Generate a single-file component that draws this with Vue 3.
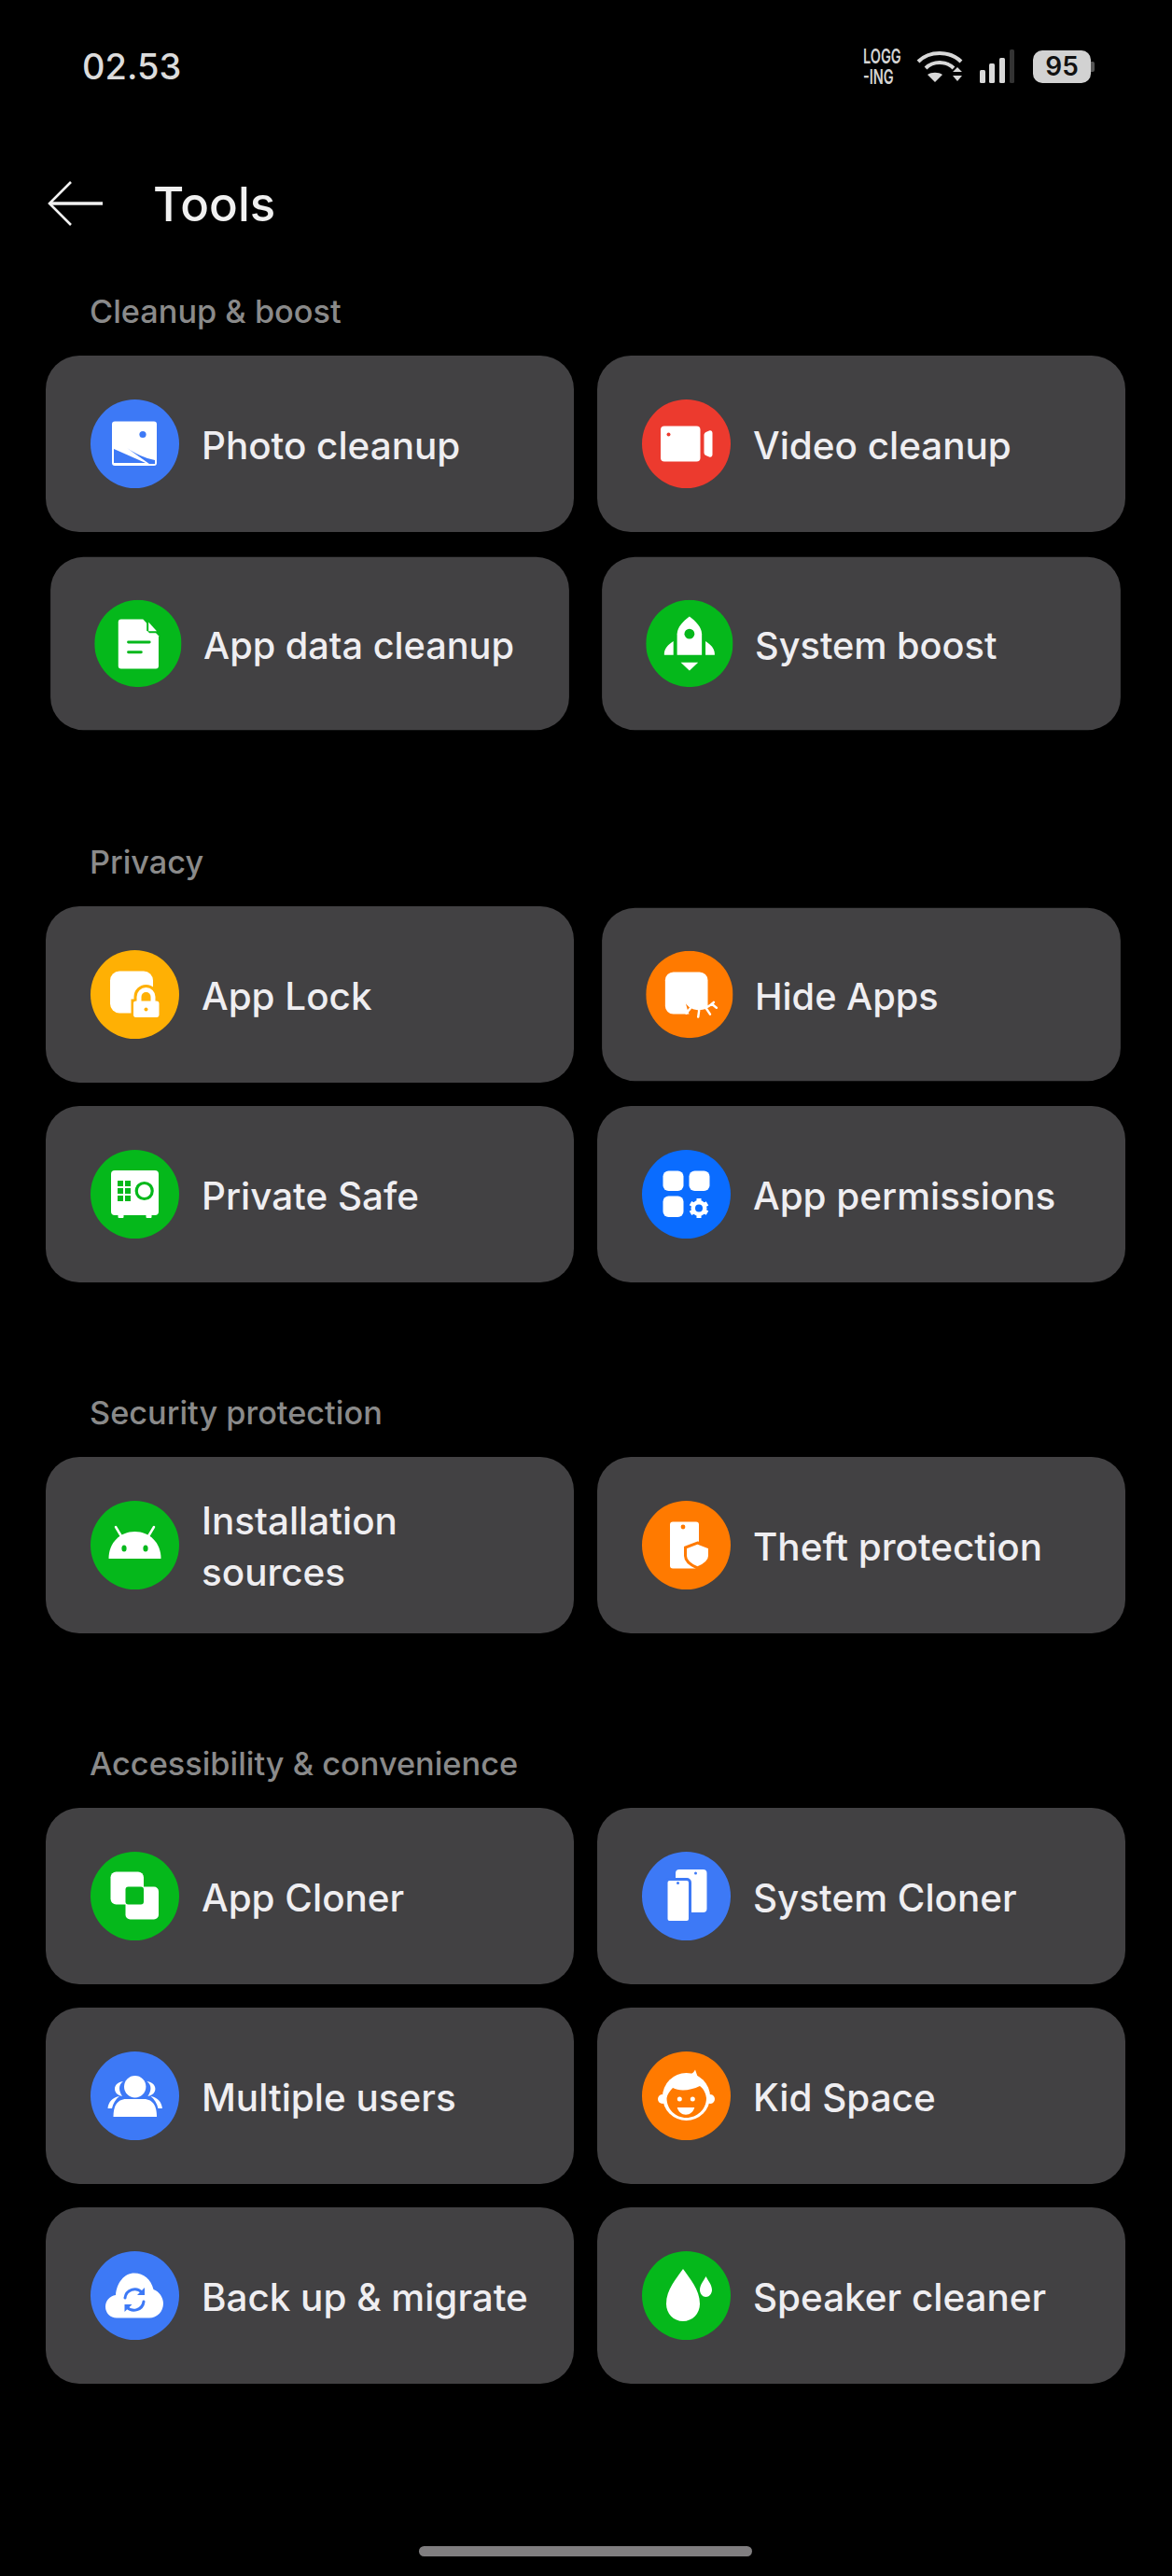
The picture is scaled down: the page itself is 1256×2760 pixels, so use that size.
<template>
  <div class="screen">
    <div class="status">
      <span class="time">02.53</span>
      <div class="status-right">
        <div class="logging"><span>LOGG</span><span>-ING</span></div>
        <svg class="wifi" viewBox="0 0 50 36" width="50" height="36" fill="none" stroke="#d8d8d8" stroke-width="4">
          <path d="M2 13C14 1 36 1 48 13" />
          <path d="M10 20C18 12 32 12 40 20" />
          <path d="M20 35l-8-8c4-3 12-3 16 0z" fill="#d8d8d8" stroke="none" />
          <path d="M39 24l5-5 5 5zM39 28h10l-5 6z" fill="#d8d8d8" stroke="none" />
        </svg>
        <svg class="signal" viewBox="0 0 37 36" width="37" height="36">
          <rect x="0" y="22" width="6" height="14" rx="1.5" fill="#d8d8d8" />
          <rect x="10" y="15" width="6" height="21" rx="1.5" fill="#d8d8d8" />
          <rect x="21" y="9" width="6" height="27" rx="1.5" fill="#d8d8d8" />
          <rect x="32" y="0" width="5" height="36" rx="1.5" fill="#333" />
        </svg>
        <div class="battery"><span>95</span><i></i></div>
      </div>
    </div>

    <div class="titlebar">
      <svg class="back" viewBox="0 0 62 50" width="62" height="50" fill="none" stroke="#f2f2f2" stroke-width="3.5">
        <path d="M26 2L3 25l23 23" stroke-width="2.6" />
        <path d="M3 25h57" />
      </svg>
      <h1>Tools</h1>
    </div>

    <section v-for="group in groups" :key="group.title" class="group">
      <h2>{{ group.title }}</h2>
      <div class="grid">
        <div
          v-for="item in group.items"
          :key="item.label"
          class="card"
          :class="{ shrunk: item.shrunk }"
        >
          <svg class="icon" :class="item.color" viewBox="0 0 95 95" width="95" height="95" fill="#fff">
            <circle class="disc" cx="47.5" cy="47.5" r="47.5" />
            <template v-if="item.icon === 'photo'">
              <rect x="23" y="23.5" width="48" height="47.5" rx="3" />
              <circle class="cut" cx="56" cy="37.5" r="3.6" />
              <path class="cut" d="M25 53l34 15H25z" />
              <path class="cut" d="M39 52c9 6 19 11 30 13v4h-6z" />
            </template>
            <template v-else-if="item.icon === 'video'">
              <rect x="20" y="28.5" width="42.5" height="38" rx="4" />
              <path d="M66.5 38c0-1.5 1-2.5 2-3l3.5-1.5c2-.8 3.5.5 3.5 2.5v23c0 2-1.5 3.2-3.5 2.5l-3.5-1.5c-1-.5-2-1.5-2-3z" />
              <circle class="cut" cx="28.5" cy="37.5" r="2" />
            </template>
            <template v-else-if="item.icon === 'doc'">
              <path d="M29 21h24l17 18v33a3 3 0 0 1-3 3H29a3 3 0 0 1-3-3V24a3 3 0 0 1 3-3z" />
              <path class="cut" d="M57 23l12 13h-9l-3-3z" />
              <path d="M59 24l9 10h-9z" />
              <path class="line" d="M37 46h23M37 57h14" />
            </template>
            <template v-else-if="item.icon === 'rocket'">
              <path d="M47.5 18c7 5.5 13 11 13.5 19v23H34V37c.5-8 6.5-13.5 13.5-19z" />
              <circle class="cut" cx="47.5" cy="37" r="5.5" />
              <path d="M30 45v15H20c-.5-6 3.5-11 10-15zM65 45v15h10c.5-6-3.5-11-10-15z" />
              <path d="M38 68h19l-9.5 9z" />
            </template>
            <template v-else-if="item.icon === 'lock'">
              <rect x="21" y="22.5" width="46" height="45" rx="10" />
              <path class="outline" d="M45 54h3v-4a11.5 11.5 0 0 1 23 0v4h3v16a3 3 0 0 1-3 3H48a3 3 0 0 1-3-3z" />
              <path class="cut" d="M54.5 56v-6a5 5 0 0 1 10 0v6z" />
              <rect x="46" y="54.5" width="27.5" height="17.5" rx="3" />
              <circle class="cut" cx="59.5" cy="63.5" r="2" />
            </template>
            <template v-else-if="item.icon === 'hide'">
              <rect x="21" y="23" width="46.5" height="46" rx="9" />
              <path class="cut" d="M43 54C48 65 66 67 75 56L76 74H50C46 68 44 60 43 54z" />
              <path class="lash" d="M43 54c5 11 20 13 31 2M49 62l-5 6M58 65l-1 7M66 63l4 6M72 58l5 4" />
            </template>
            <template v-else-if="item.icon === 'safe'">
              <rect x="22" y="22" width="51" height="48" rx="4" />
              <rect x="29.5" y="69" width="6" height="4" rx="1" />
              <rect x="59.5" y="69" width="6" height="4" rx="1" />
              <g class="cut">
                <rect x="29" y="33" width="6" height="6" /><rect x="37" y="33" width="6" height="6" />
                <rect x="29" y="41" width="6" height="6" /><rect x="37" y="41" width="6" height="6" />
                <rect x="29" y="49" width="6" height="6" /><rect x="37" y="49" width="6" height="6" />
              </g>
              <circle class="ring" cx="57.7" cy="44" r="8.5" />
            </template>
            <template v-else-if="item.icon === 'apps'">
              <rect x="22.5" y="22.5" width="22" height="21.5" rx="6" />
              <rect x="50.5" y="22.5" width="22" height="21.5" rx="6" />
              <rect x="22.5" y="49.5" width="22" height="22.5" rx="6" />
              <circle cx="61" cy="62.5" r="8.5" />
              <path class="teeth" d="M61 52v21M52 57.2l18 10.5M52 67.8l18-10.5" />
              <circle class="cut" cx="61" cy="62.5" r="4" />
            </template>
            <template v-else-if="item.icon === 'android'">
              <path d="M19.5 62c0-17 12-29 28-29s28 12 28 29z" />
              <path class="lash" d="M33 38l-6-10M62 38l6-10" />
              <ellipse class="cut" cx="36" cy="51" rx="2.6" ry="3.6" />
              <ellipse class="cut" cx="59" cy="51" rx="2.6" ry="3.6" />
            </template>
            <template v-else-if="item.icon === 'theft'">
              <rect x="30" y="22.5" width="31" height="50" rx="3" />
              <circle class="cut" cx="44" cy="28" r="2.4" />
              <path class="shield" d="M59.5 45l13 5v9c0 6-6 10-13 13-7-3-13-7-13-13v-9z" />
            </template>
            <template v-else-if="item.icon === 'clone'">
              <rect x="21.5" y="21.5" width="35.5" height="35" rx="6" />
              <rect x="37.5" y="37.5" width="35.5" height="35" rx="5" />
              <rect class="cut" x="37.5" y="37.5" width="19.5" height="19" rx="3" />
            </template>
            <template v-else-if="item.icon === 'users'">
              <path d="M35 32C28 33 26 37 26 40C26 44 29 47 34 48C32 45 31 42 31 39.5C31 37 32 34 35 32z" />
              <path d="M31 48C24 49 19 54 18.5 61L23 61C24 56 27 51 31 48z" />
              <g transform="translate(95.4 0) scale(-1 1)">
                <path d="M35 32C28 33 26 37 26 40C26 44 29 47 34 48C32 45 31 42 31 39.5C31 37 32 34 35 32z" />
                <path d="M31 48C24 49 19 54 18.5 61L23 61C24 56 27 51 31 48z" />
              </g>
              <circle cx="47.7" cy="37.7" r="11.7" />
              <path d="M24.5 70c0-10 3-19 14-19h18.500c11 0 14 9 14 19z" />
            </template>
            <template v-else-if="item.icon === 'cloud'">
              <path d="M28 71.5c-7 0-12-5.5-12-12 0-6.5 4.5-11.5 11-12.5C28 34 36 23.5 47 23.5c10 0 18 7 20.5 17.5 6 2 10.5 8.5 10.5 15 0 8.5-6.5 15.5-15 15.5z" />
              <path class="sync" d="M37 50a10.5 10.5 0 0 1 18-6M57 54a10.5 10.5 0 0 1-18 6" />
              <path class="cut" d="M58 39v8h-8zM36.5 65v-8h8z" />
            </template>
            <template v-else-if="item.icon === 'phones'">
              <rect x="36" y="19" width="33.5" height="46" rx="4" />
              <rect class="phone-front" x="26" y="29.5" width="25.5" height="46" rx="3.5" />
              <circle class="cut" cx="57.5" cy="23" r="1.5" />
              <circle class="cut" cx="38.5" cy="33.5" r="1.5" />
            </template>
            <template v-else-if="item.icon === 'kid'">
              <circle cx="22" cy="51" r="5" />
              <circle cx="73" cy="51" r="5" />
              <circle cx="47.5" cy="48.5" r="25.5" />
              <path d="M44 27c6-1 11-3 13-7.5l3 8.5z" />
              <path class="cut" d="M26.5 50C27 46 30 42 33 39C40 43 52 42 62 37C66 40 68.5 45 69 50C69 62 59 71 47.5 71C36 71 26.5 62 26.5 50z" />
              <circle cx="40.3" cy="51" r="2.5" />
              <circle cx="54.3" cy="51" r="2.5" />
              <path d="M37.7 60h18.6c-1 4.5-5 7.7-9.3 7.7s-8.300-3.2-9.300-7.700z" />
            </template>
            <template v-else-if="item.icon === 'drops'">
              <path d="M44 19c7 10 18 22 18 37.5C62 67 54 75 44 75s-18-8-18-18.5C26 41 37 29 44 19z" />
              <path d="M68.5 27c2 4 6.5 9 6.5 14.5 0 4-3 7.500-6.500 7.500S62 45.500 62 41.500C62 36 66.500 31 68.500 27z" />
            </template>
          </svg>
          <span class="label">{{ item.label }}</span>
        </div>
      </div>
    </section>

    <div class="home-bar"></div>
  </div>
</template>

<script setup>
const groups = [
  {
    title: 'Cleanup & boost',
    items: [
      { label: 'Photo cleanup', icon: 'photo', color: 'blue' },
      { label: 'Video cleanup', icon: 'video', color: 'red' },
      { label: 'App data cleanup', icon: 'doc', color: 'green', shrunk: true },
      { label: 'System boost', icon: 'rocket', color: 'green', shrunk: true },
    ],
  },
  {
    title: 'Privacy',
    items: [
      { label: 'App Lock', icon: 'lock', color: 'yellow' },
      { label: 'Hide Apps', icon: 'hide', color: 'orange', shrunk: true },
      { label: 'Private Safe', icon: 'safe', color: 'green' },
      { label: 'App permissions', icon: 'apps', color: 'azure' },
    ],
  },
  {
    title: 'Security protection',
    items: [
      { label: 'Installation sources', icon: 'android', color: 'green' },
      { label: 'Theft protection', icon: 'theft', color: 'orange' },
    ],
  },
  {
    title: 'Accessibility & convenience',
    items: [
      { label: 'App Cloner', icon: 'clone', color: 'green' },
      { label: 'System Cloner', icon: 'phones', color: 'blue' },
      { label: 'Multiple users', icon: 'users', color: 'blue' },
      { label: 'Kid Space', icon: 'kid', color: 'orange' },
      { label: 'Back up & migrate', icon: 'cloud', color: 'blue' },
      { label: 'Speaker cleaner', icon: 'drops', color: 'green' },
    ],
  },
]
</script>

<style>
html, body {
  background: #000;
}
</style>

<style scoped>
.screen {
  position: relative;
  width: 1256px;
  height: 2760px;
  background: #000;
  font-family: Inter, "Liberation Sans", sans-serif;
  overflow: hidden;
}
.status {
  height: 142px;
  padding: 0 83px 0 88px;
  display: flex;
  align-items: center;
  justify-content: space-between;
  box-sizing: border-box;
}
.time {
  font-size: 38px;
  font-weight: 500;
  color: #dcdcdc;
}
.status-right {
  display: flex;
  align-items: center;
}
.logging {
  width: 39px;
  display: flex;
  flex-direction: column;
  font-size: 22px;
  line-height: 22px;
  font-weight: 600;
  color: #d4d4d4;
  margin-right: 18px;
}
.logging span {
  display: block;
  transform: scaleX(0.66);
  transform-origin: left center;
  white-space: nowrap;
}
.wifi {
  margin-right: 18px;
}
.signal {
  margin-right: 20px;
}
.battery {
  position: relative;
  width: 62px;
  height: 35px;
  margin-right: 4px;
  border-radius: 10px;
  background: #d2d2d2;
  display: flex;
  align-items: center;
  justify-content: center;
  color: #111;
  font-size: 28px;
  font-weight: 600;
}
.battery i {
  position: absolute;
  right: -4px;
  top: 12px;
  width: 4px;
  height: 11px;
  background: #555;
  border-radius: 0 2px 2px 0;
}
.titlebar {
  height: 152px;
  padding-left: 50px;
  display: flex;
  align-items: center;
}
.titlebar h1 {
  margin: 0 0 0 52px;
  font-size: 51px;
  font-weight: 500;
  color: #f0f0f0;
}
.group {
  padding: 16px 50px 100px 49px;
}
.group h2 {
  margin: 0 0 23px 47px;
  font-size: 34.3px;
  line-height: 48px;
  font-weight: 500;
  color: #8a8a8a;
}
.grid {
  display: grid;
  grid-template-columns: 566px 566px;
  grid-auto-rows: 189px;
  gap: 25px;
}
.card {
  display: flex;
  align-items: center;
  gap: 24px;
  padding: 0 40px 0 48px;
  border-radius: 36px;
  background: #424143;
}
.card.shrunk {
  transform: scale(0.982);
}
.icon {
  flex: none;
}
.label {
  padding-top: 3px;
  font-size: 40.4px;
  line-height: 55px;
  font-weight: 500;
  color: #efeef1;
}
.blue { --disc: #3d79f6; }
.red { --disc: #ec3a2e; }
.green { --disc: #05b81b; }
.yellow { --disc: #ffb004; }
.orange { --disc: #ff7a00; }
.azure { --disc: #0a6cff; }
.disc, .cut {
  fill: var(--disc);
}
.line, .sync {
  fill: none;
  stroke: var(--disc);
  stroke-width: 3;
  stroke-linecap: round;
}
.outline, .shield, .phone-front {
  stroke: var(--disc);
  stroke-width: 3;
  fill: #fff;
}
.ring {
  fill: none;
  stroke: var(--disc);
  stroke-width: 3.2;
}
.lash {
  fill: none;
  stroke: #fff;
  stroke-width: 2.5;
  stroke-linecap: round;
}
.teeth {
  fill: none;
  stroke: #fff;
  stroke-width: 5;
}
.home-bar {
  position: absolute;
  left: 449px;
  top: 2728px;
  width: 357px;
  height: 11px;
  border-radius: 6px;
  background: #807e80;
}
</style>
